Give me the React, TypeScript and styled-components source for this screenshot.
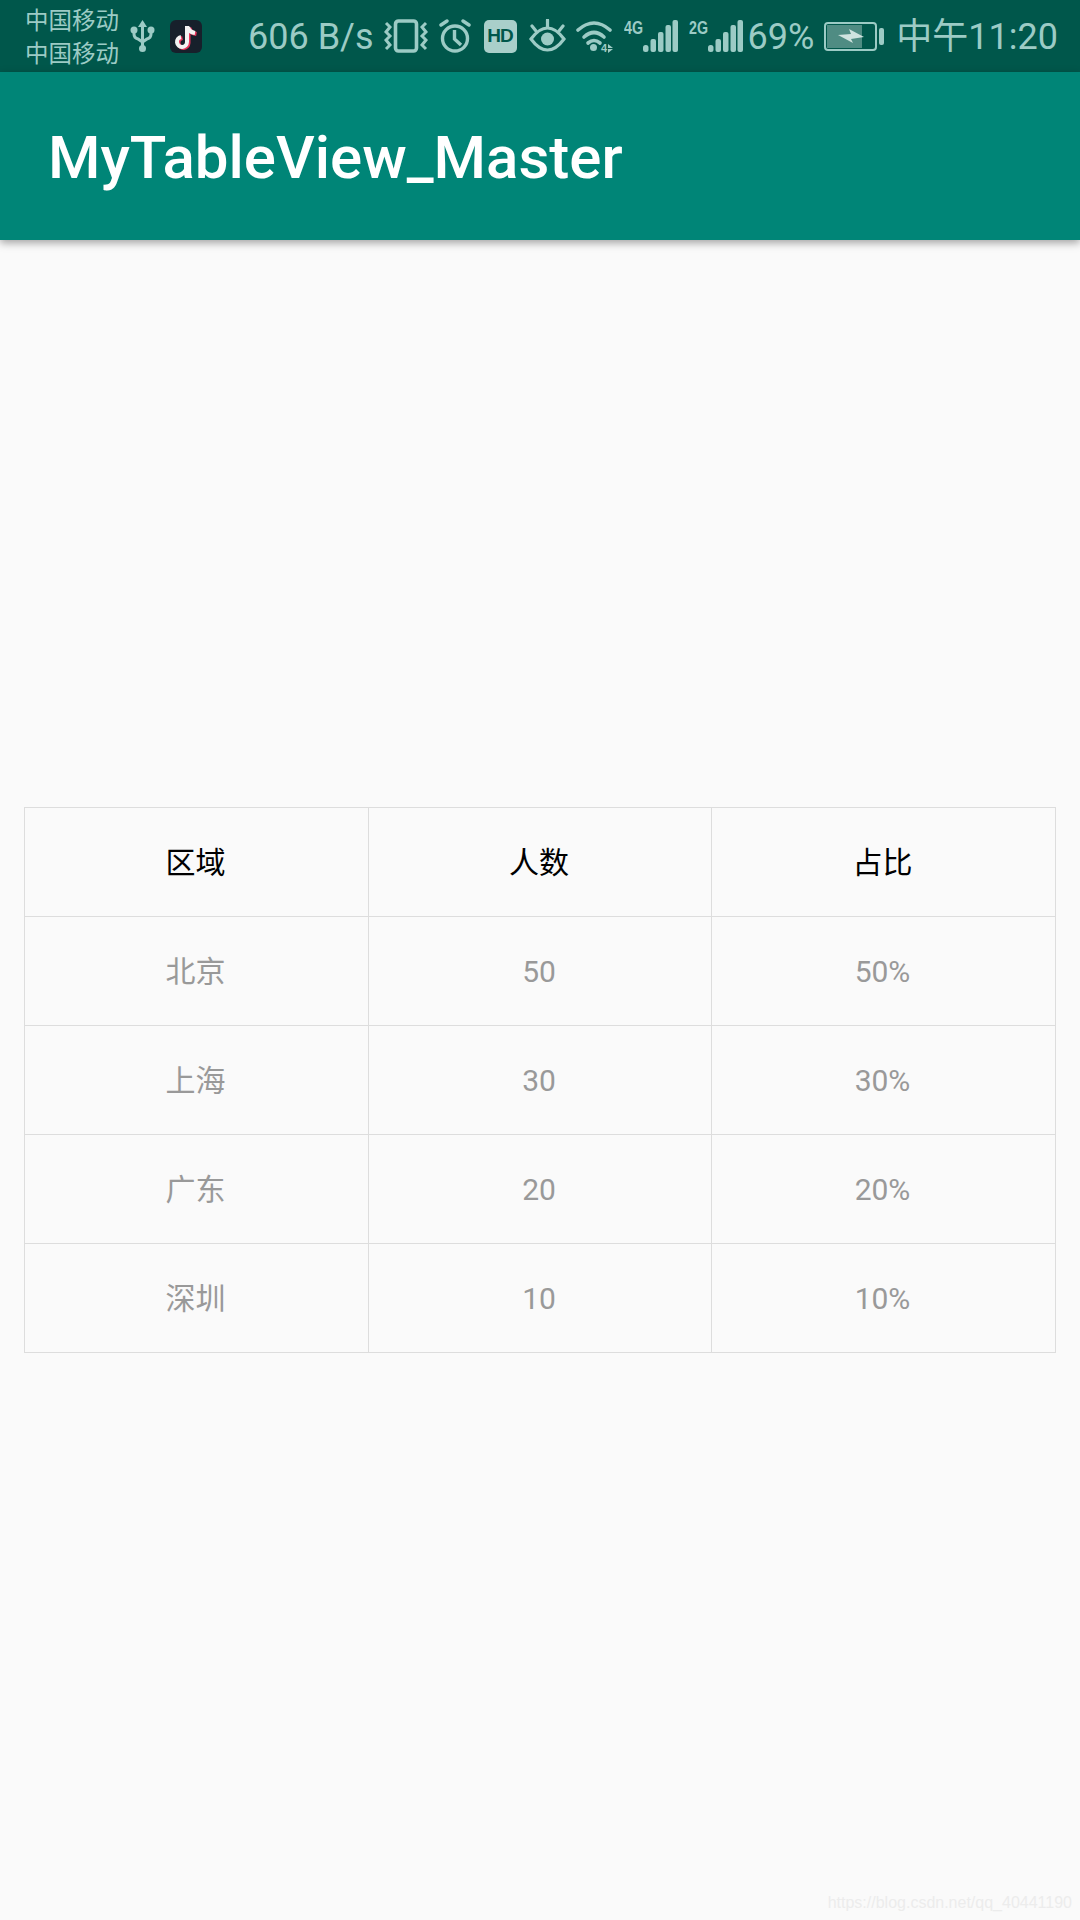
import styled, { createGlobalStyle } from 'styled-components'

const GlobalStyle = createGlobalStyle`
    html, body {
        margin: 0;
        padding: 0;
        background: #FAFAFA;
    }
`

const rows = [
    { area: '北京', count: '50', ratio: '50%' },
    { area: '上海', count: '30', ratio: '30%' },
    { area: '广东', count: '20', ratio: '20%' },
    { area: '深圳', count: '10', ratio: '10%' },
]

const iconColor = '#9CCBC5'

const UsbIcon = () => (
    <svg width="25" height="34" viewBox="0 0 25 34" fill="none" stroke={iconColor} strokeWidth="3">
        <path d="M12.5 5V29" />
        <path d="M8 8L12.5 1L17 8Z" fill={iconColor} stroke="none" />
        <circle cx="12.5" cy="29.5" r="3.5" fill={iconColor} stroke="none" />
        <path d="M4 12V15Q4 19 8 20L12.5 23" />
        <path d="M21 12V15Q21 19 17 20L12.5 23" />
        <circle cx="4" cy="11" r="3.5" fill={iconColor} stroke="none" />
        <circle cx="21" cy="11" r="3.5" fill={iconColor} stroke="none" />
    </svg>
)

const TiktokIcon = () => (
    <svg width="32" height="33" viewBox="0 0 32 33">
        <rect width="32" height="33" rx="6" fill="#17202B" />
        <path d="M17 6V22A5 5 0 1 1 11 17" fill="none" stroke="#E8335A" strokeWidth="4" transform="translate(1.5 1)" />
        <path d="M18 7Q19 12 25 13" fill="none" stroke="#E8335A" strokeWidth="4" transform="translate(1.5 1)" />
        <path d="M17 6V22A5 5 0 1 1 11 17" fill="none" stroke="#F2F2F2" strokeWidth="4" />
        <path d="M18 7Q19 12 25 13" fill="none" stroke="#F2F2F2" strokeWidth="4" />
    </svg>
)

const VibrateIcon = () => (
    <svg width="44" height="34" viewBox="0 0 44 34" fill="none" stroke={iconColor} strokeWidth="3">
        <rect x="11.5" y="2" width="21" height="30" rx="3" strokeWidth="3.6" />
        <path d="M2 4L6 8L2 13L6 17L2 21L6 26L2 30" />
        <path d="M42 4L38 8L42 13L38 17L42 21L38 26L42 30" />
    </svg>
)

const AlarmIcon = () => (
    <svg width="32" height="35" viewBox="0 0 32 35" fill="none" stroke={iconColor} strokeWidth="3.4">
        <circle cx="16" cy="19.5" r="12.5" />
        <path d="M15.5 11V20L22 26" />
        <path d="M2 6L8 2" strokeLinecap="round" />
        <path d="M30 6L24 2" strokeLinecap="round" />
    </svg>
)

const HdBadge = styled.span`
    width: 33px;
    height: 33px;
    border-radius: 5px;
    background: #A9CFCA;
    color: #00574B;
    font-family: "Liberation Sans", sans-serif;
    font-size: 19px;
    font-weight: 700;
    letter-spacing: -1px;
    display: flex;
    align-items: center;
    justify-content: center;
`

const EyeIcon = () => (
    <svg width="37" height="34" viewBox="0 0 37 34" fill="none" stroke={iconColor} strokeWidth="3.2">
        <path d="M2 20Q10 9 18.5 9T35 20Q27 31 18.5 31T2 20Z" />
        <circle cx="18.5" cy="20" r="6.5" fill={iconColor} stroke="none" />
        <path d="M7 12L3 7M30 12L34 7M18.5 8V1" strokeLinecap="round" />
    </svg>
)

const WifiIcon = () => (
    <svg width="39" height="33" viewBox="0 0 39 33" fill="none" stroke={iconColor} strokeWidth="3.6" strokeLinecap="round">
        <path d="M3 10Q19 -4 35 10" />
        <path d="M9 17Q19 8 29 17" />
        <path d="M13 23Q19 18 25 23" />
        <circle cx="18.5" cy="27.5" r="3.5" fill={iconColor} stroke="none" />
        <text x="26" y="32" fontFamily="Liberation Sans, sans-serif" fontSize="11" fontWeight="700" fill={iconColor} stroke="none">4</text>
        <path d="M33 24L38 28H33ZM33 33L38 29H33Z" fill={iconColor} stroke="none" />
    </svg>
)

const SignalIcon = () => (
    <svg width="35" height="34" viewBox="0 0 35 34" fill={iconColor}>
        <rect x="0" y="26" width="5.5" height="7" rx="2.5" />
        <rect x="7.5" y="20" width="5.5" height="13" rx="2" />
        <rect x="15" y="13" width="5.5" height="20" rx="2" />
        <rect x="22.5" y="6" width="5.5" height="27" rx="2" />
        <rect x="29.5" y="1" width="5.5" height="32" rx="2" />
    </svg>
)

const BatteryIcon = () => (
    <svg width="60" height="30" viewBox="0 0 60 30" fill="none">
        <rect x="1" y="2" width="51" height="27" rx="3" stroke={iconColor} strokeWidth="2" />
        <rect x="3" y="4" width="35" height="23" fill="#4F8C83" />
        <path d="M14 14L27 13L25 8L40 16L27 18L29 22Z" fill="#CFE3DF" />
        <rect x="55" y="7" width="5" height="17" rx="2" fill={iconColor} />
    </svg>
)

export default function App() {
    return (
        <Page>
            <GlobalStyle />
            <StatusBar>
                <Carriers>
                    <span>中国移动</span>
                    <span>中国移动</span>
                </Carriers>
                <IconSlot $left={11}><UsbIcon /></IconSlot>
                <IconSlot $left={15}><TiktokIcon /></IconSlot>
                <StatusText $left={46}>606 B/s</StatusText>
                <IconSlot $left={10}><VibrateIcon /></IconSlot>
                <IconSlot $left={11}><AlarmIcon /></IconSlot>
                <IconSlot $left={13}><HdBadge>HD</HdBadge></IconSlot>
                <IconSlot $left={12}><EyeIcon /></IconSlot>
                <IconSlot $left={9}><WifiIcon /></IconSlot>
                <SignalGroup $left={10}>
                    <NetLabel>4G</NetLabel>
                    <SignalIcon />
                </SignalGroup>
                <SignalGroup $left={11}>
                    <NetLabel>2G</NetLabel>
                    <SignalIcon />
                </SignalGroup>
                <StatusText $left={5}>69%</StatusText>
                <IconSlot $left={10}><BatteryIcon /></IconSlot>
                <StatusText $left={12}>中午11:20</StatusText>
            </StatusBar>
            <AppBar>
                <Title>MyTableView_Master</Title>
            </AppBar>
            <Content>
                <Table>
                    <Row>
                        <Cell $cjk $head>区域</Cell>
                        <Cell $cjk $head>人数</Cell>
                        <Cell $cjk $head>占比</Cell>
                    </Row>
                    {rows.map((row) => (
                        <Row key={row.area}>
                            <Cell $cjk>{row.area}</Cell>
                            <Cell>{row.count}</Cell>
                            <Cell>{row.ratio}</Cell>
                        </Row>
                    ))}
                </Table>
            </Content>
            <Watermark>https://blog.csdn.net/qq_40441190</Watermark>
        </Page>
    )
}

const Page = styled.div`
    position: relative;
    width: 1080px;
    height: 1920px;
    overflow: hidden;
    display: flex;
    flex-direction: column;
    background: #FAFAFA;
    font-family: Roboto, "Noto Sans CJK SC", sans-serif;
`

const StatusBar = styled.div`
    height: 72px;
    flex-shrink: 0;
    padding-left: 25px;
    box-sizing: border-box;
    display: flex;
    align-items: center;
    background: #00574B;
    color: ${iconColor};
`

const Carriers = styled.div`
    display: flex;
    flex-direction: column;
    font-family: "Noto Sans CJK SC", sans-serif;
    font-size: 23.5px;
    line-height: 33px;
    white-space: nowrap;
`

const IconSlot = styled.div<{ $left: number }>`
    display: flex;
    margin-left: ${(p) => p.$left}px;
`

const StatusText = styled.span<{ $left: number }>`
    margin-left: ${(p) => p.$left}px;
    padding-top: 2px;
    font-size: 36px;
    line-height: 70px;
    white-space: nowrap;
`

const SignalGroup = styled.div<{ $left: number }>`
    position: relative;
    width: 54px;
    height: 34px;
    margin-left: ${(p) => p.$left}px;
    display: flex;
    justify-content: flex-end;
`

const NetLabel = styled.span`
    position: absolute;
    left: 0;
    top: -2px;
    font-family: "Liberation Sans", sans-serif;
    font-size: 19px;
    font-weight: 700;
    transform: scaleX(0.75);
    transform-origin: left top;
`

const AppBar = styled.header`
    height: 168px;
    flex-shrink: 0;
    padding: 2px 0 0 48px;
    box-sizing: border-box;
    display: flex;
    align-items: center;
    background: #008577;
    box-shadow: 0 3px 8px rgba(0, 0, 0, 0.35);
    position: relative;
`

const Title = styled.h1`
    margin: 0;
    color: #FFF;
    font-size: 60px;
    font-weight: 500;
`

const Content = styled.main`
    padding: 567px 24px 0;
`

const Table = styled.div`
    width: 1032px;
    box-sizing: border-box;
    border: 1px solid #DDD;
`

const Row = styled.div`
    display: grid;
    grid-template-columns: 344px 343px 1fr;
    height: 109px;
    box-sizing: border-box;

    &:not(:last-child) {
        border-bottom: 1px solid #DDD;
    }

    &:last-child {
        height: 108px;
    }
`

const Cell = styled.div<{ $head?: boolean; $cjk?: boolean }>`
    display: flex;
    align-items: center;
    justify-content: center;
    box-sizing: border-box;
    padding: ${(p) => (p.$cjk ? '0 2px 4px 0' : '0 2px 0 0')};
    font-size: 30px;
    color: ${(p) => (p.$head ? '#000' : '#999')};

    &:not(:last-child) {
        border-right: 1px solid #DDD;
    }
`

const Watermark = styled.span`
    position: absolute;
    right: 8px;
    bottom: 8px;
    font-family: "Liberation Sans", sans-serif;
    font-size: 16px;
    color: #ECECEC;
`
